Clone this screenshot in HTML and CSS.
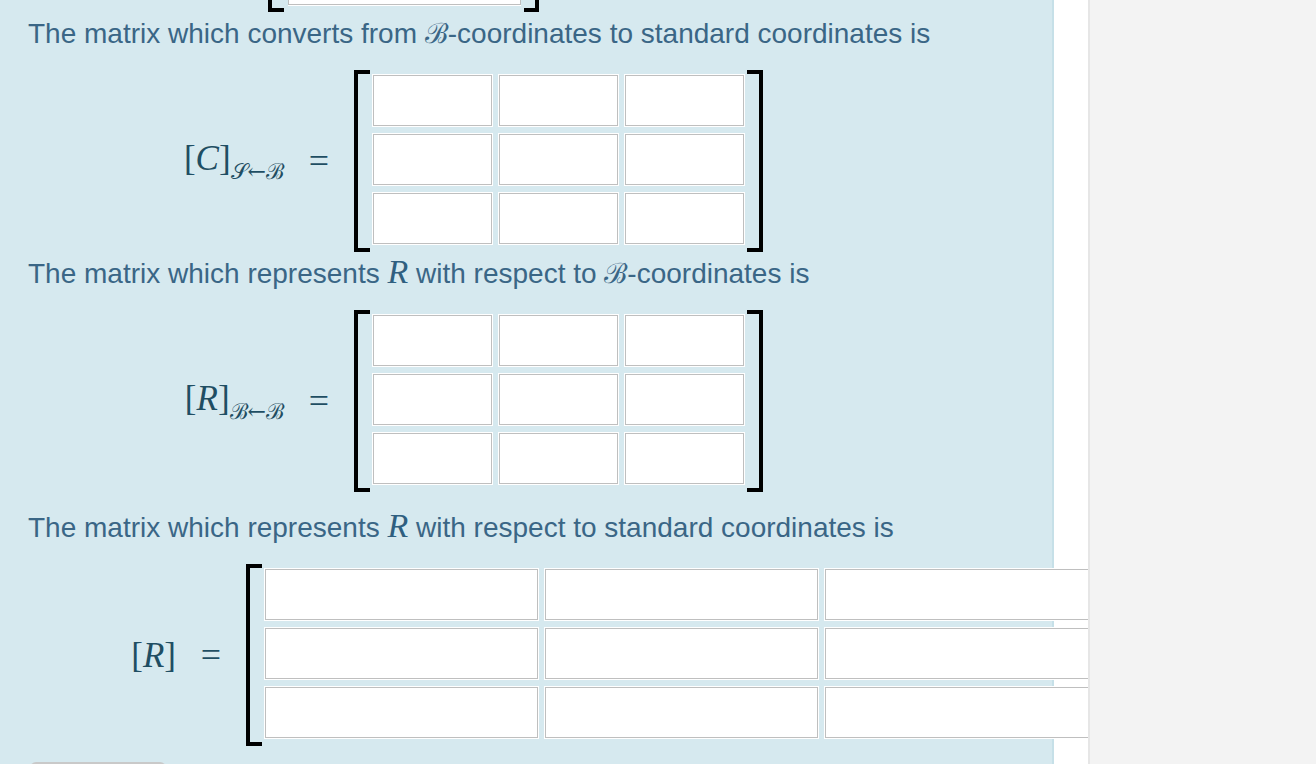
FILE: index.html
```html
<!DOCTYPE html>
<html lang="en">
<head>
  <meta charset="UTF-8" />
  <title>Change of basis</title>
  <link rel="stylesheet" href="styles.css">
</head>
<body>
  <div class="page">
    <div class="panel">
      <!-- bottom of the previous answer matrix, scrolled off the top -->
      <div class="matrix-tail">
        <span class="tail-bracket tail-left"></span>
        <span class="tail-cell"></span>
        <span class="tail-bracket tail-right"></span>
      </div>

      <p class="prompt">The matrix which converts from <span class="m-cal">ℬ</span>-coordinates to standard coordinates is</p>

      <div class="display">
        <div class="label"><span class="m-up">[</span><span class="m-it">C</span><span class="m-up">]</span><span class="m-sub"><span class="m-cal">𝒮</span>←<span class="m-cal">ℬ</span></span></div>
        <div class="equals">=</div>
        <div class="matrix">
          <div class="bracket bracket-left"></div>
          <div class="grid">
            <div class="cell"><input type="text"></div>
            <div class="cell"><input type="text"></div>
            <div class="cell"><input type="text"></div>
            <div class="cell"><input type="text"></div>
            <div class="cell"><input type="text"></div>
            <div class="cell"><input type="text"></div>
            <div class="cell"><input type="text"></div>
            <div class="cell"><input type="text"></div>
            <div class="cell"><input type="text"></div>
          </div>
          <div class="bracket bracket-right"></div>
        </div>
      </div>

      <p class="prompt">The matrix which represents <span class="m-it">R</span> with respect to <span class="m-cal">ℬ</span>-coordinates is</p>

      <div class="display">
        <div class="label"><span class="m-up">[</span><span class="m-it">R</span><span class="m-up">]</span><span class="m-sub"><span class="m-cal">ℬ</span>←<span class="m-cal">ℬ</span></span></div>
        <div class="equals">=</div>
        <div class="matrix">
          <div class="bracket bracket-left"></div>
          <div class="grid">
            <div class="cell"><input type="text"></div>
            <div class="cell"><input type="text"></div>
            <div class="cell"><input type="text"></div>
            <div class="cell"><input type="text"></div>
            <div class="cell"><input type="text"></div>
            <div class="cell"><input type="text"></div>
            <div class="cell"><input type="text"></div>
            <div class="cell"><input type="text"></div>
            <div class="cell"><input type="text"></div>
          </div>
          <div class="bracket bracket-right"></div>
        </div>
      </div>

      <p class="prompt prompt-spaced">The matrix which represents <span class="m-it">R</span> with respect to standard coordinates is</p>

      <div class="display display-wide">
        <div class="label"><span class="m-up">[</span><span class="m-it">R</span><span class="m-up">]</span></div>
        <div class="equals">=</div>
        <div class="matrix">
          <div class="bracket bracket-left"></div>
          <div class="grid">
            <div class="cell"><input type="text"></div>
            <div class="cell"><input type="text"></div>
            <div class="cell"><input type="text"></div>
            <div class="cell"><input type="text"></div>
            <div class="cell"><input type="text"></div>
            <div class="cell"><input type="text"></div>
            <div class="cell"><input type="text"></div>
            <div class="cell"><input type="text"></div>
            <div class="cell"><input type="text"></div>
          </div>
          <div class="bracket bracket-right"></div>
        </div>
      </div>

      <div class="submit-btn"></div>
    </div>
  </div>
</body>
</html>
```

FILE: styles.css
```css
body {
  margin: 0;
  background: #f3f3f3;
  font-family: 'Liberation Sans', Arial, sans-serif;
  overflow: hidden;
}
.page {
  width: 1088px;
  height: 764px;
  background: #fff;
  border-right: 2px solid #e6e6e6;
  overflow: hidden;
}
.panel {
  box-sizing: border-box;
  width: 1054px;
  min-height: 764px;
  padding: 0 28px;
  background: #d6e9ef;
  border-right: 2px solid #c6e0e8;
}

/* tail of the matrix above */
.matrix-tail {
  display: flex;
  align-items: flex-start;
  height: 12px;
  padding-left: 240px;
}
.tail-bracket {
  height: 8px;
  border-bottom: 4px solid #000;
}
.tail-left {
  width: 12px;
  border-left: 4px solid #000;
}
.tail-right {
  width: 11px;
  margin-left: 3px;
  border-right: 4px solid #000;
}
.tail-cell {
  width: 231px;
  height: 4px;
  margin-left: 4px;
  background: #fff;
  border: 1px solid #bfbfbf;
  border-top: none;
  box-shadow: 0 1px 0 #fff;
}

.prompt {
  margin: 2px 0 0;
  font-size: 28px;
  line-height: 40px;
  color: #3a6686;
  white-space: nowrap;
}
.prompt-spaced {
  margin-top: 16px;
}

/* math bits */
.m-it {
  font-family: 'Liberation Serif', 'DejaVu Serif', serif;
  font-style: italic;
  font-size: 35px;
}
.m-up {
  font-family: 'Liberation Serif', 'DejaVu Serif', serif;
}
.m-cal {
  font-family: 'DejaVu Serif', 'Liberation Serif', serif;
}
.prompt .m-it {
  font-size: 34px;
  line-height: 0;
  color: #2f5f80;
}
.prompt .m-cal {
  font-size: 28px;
}
.m-sub {
  font-size: 22px;
  vertical-align: -9px;
  font-family: 'DejaVu Serif', serif;
}

.display {
  display: flex;
  align-items: center;
  margin-top: 16px;
}
.display > * {
  flex: none;
}
.label {
  width: 256px;
  text-align: right;
  font-size: 35px;
  color: #1f4e63;
  white-space: nowrap;
}
.display-wide .label {
  width: 148px;
}
.equals {
  width: 70px;
  text-align: center;
  font-family: 'Liberation Serif', serif;
  font-size: 36px;
  color: #1f4e63;
}

.matrix {
  display: flex;
}
.bracket {
  width: 12px;
  border: 4px solid #000;
}
.bracket-left {
  border-right: none;
}
.bracket-right {
  border-left: none;
}
.grid {
  display: grid;
  grid-template-columns: repeat(3, 121px);
  grid-auto-rows: 53px;
  gap: 6px 5px;
  padding: 4px 2px 7px;
}
.display-wide .grid {
  grid-template-columns: repeat(3, 275px);
}
.cell {
  background: #fff;
  padding: 1px;
}
.cell input {
  display: block;
  box-sizing: border-box;
  width: 100%;
  height: 100%;
  margin: 0;
  padding: 0;
  border: 1px solid #bfbfbf;
  background: #fff;
}

.submit-btn {
  width: 136px;
  height: 30px;
  margin: 16px 0 0 2px;
  background: #c9c9c9;
  border-radius: 6px;
}
```
